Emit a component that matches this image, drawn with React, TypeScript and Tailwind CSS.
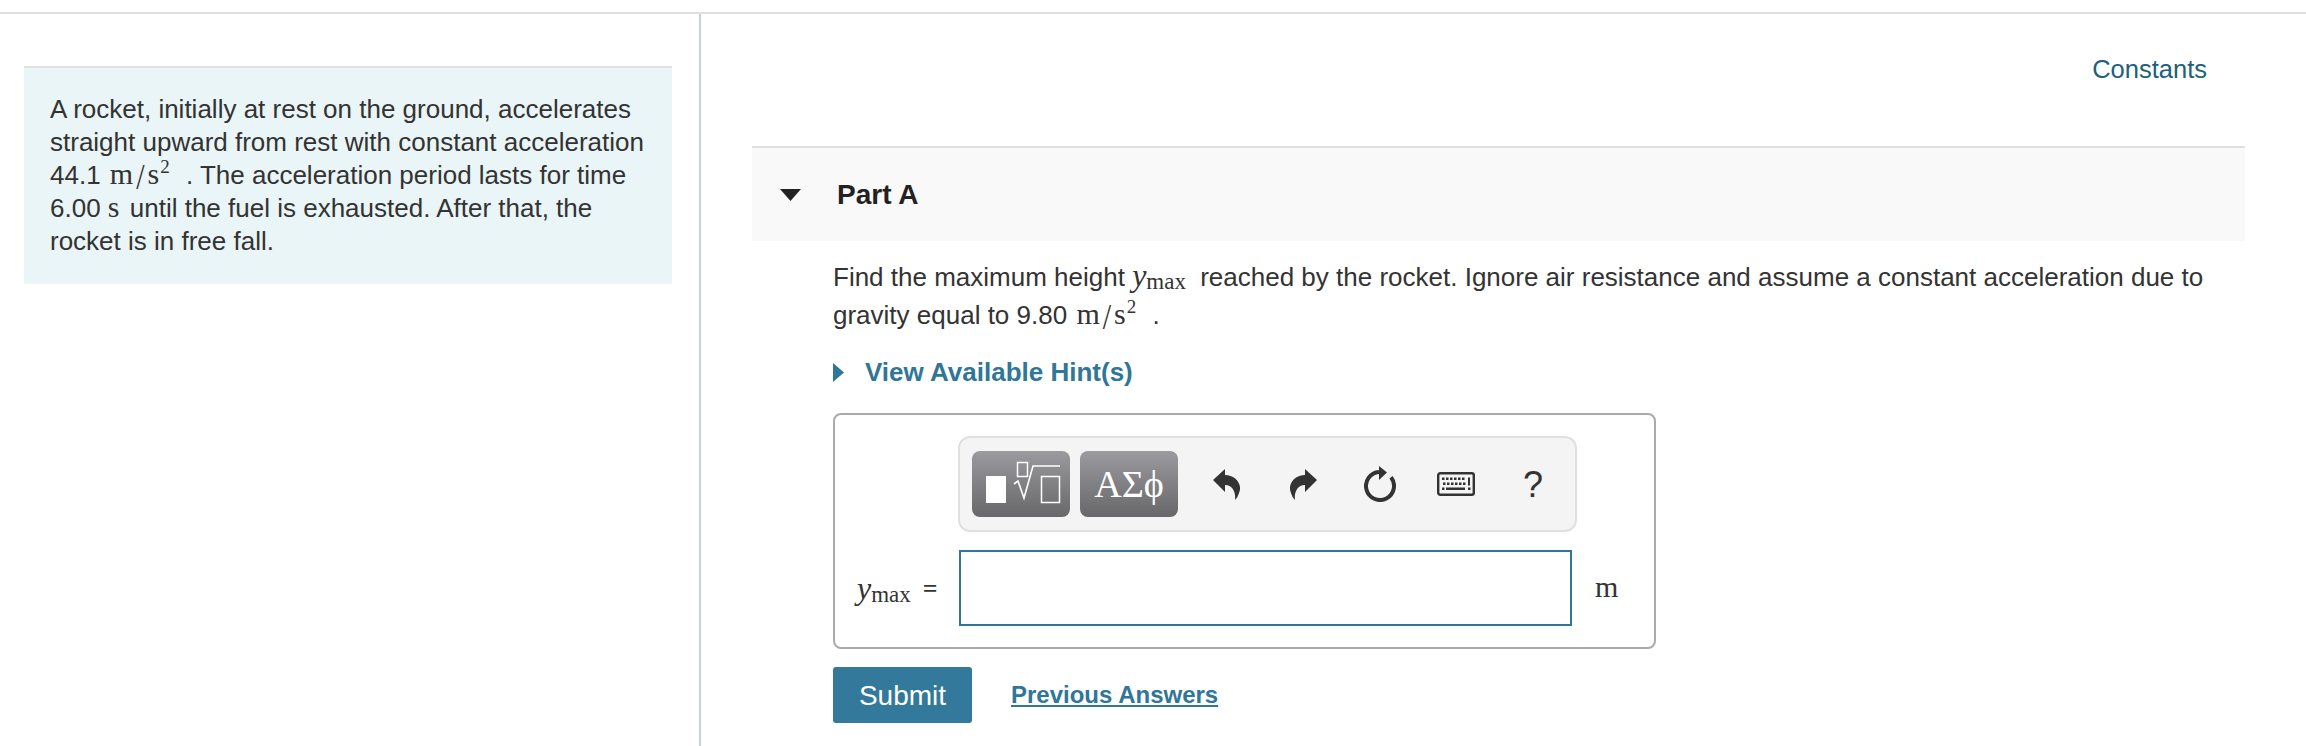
const serif = "font-['Liberation_Serif',serif]"

function MetersPerSecond({ tall }: { tall?: boolean }) {
  return (
    <span className={`${serif} ${tall ? 'inline-block leading-[39px]' : 'leading-none'} ml-[2px] mr-[9px] text-[30px]`}>
      m<span className="relative top-[3px] mx-[3px] inline-block scale-y-[1.2] leading-none">/</span>s
      <span className="relative top-[-11px] ml-[1px] text-[19px] leading-none">2</span>
    </span>
  )
}

function YMax() {
  return (
    <span className={`${serif} leading-none`}>
      <i className="text-[32px] leading-none">y</i>
      <span className="relative top-[3px] text-[23px] leading-none">max</span>
    </span>
  )
}

function RootIcon() {
  return (
    <svg width="98" height="66" viewBox="0 0 98 66" fill="none" stroke="#fff">
      <rect x="14" y="25" width="20" height="27" fill="#fff" stroke="none" />
      <rect x="45.500" y="11.500" width="10" height="14" strokeWidth="1.500" />
      <path d="M42 33 L46 30 L52 47 L61 15 H88" strokeWidth="1.600" />
      <rect x="69.500" y="25.500" width="18" height="26" strokeWidth="1.500" />
    </svg>
  )
}

function UndoIcon({ flip }: { flip?: boolean }) {
  return (
    <svg width="27" height="31" viewBox="0 0 27 31" className={flip ? '-scale-x-100' : ''}>
      <path d="M0 11 L12 0 V6 C22 6 30 15 26 24 C25 27 24 29 22 31 C23 24 20 16 12 16 V23 Z" fill="#333" />
    </svg>
  )
}

function ResetIcon() {
  return (
    <svg width="32" height="36" viewBox="0 0 32 36" fill="none">
      <path d="M15 6 A14 14 0 1 0 27 11.300" stroke="#333" strokeWidth="4" />
      <path d="M15 0 L23 6.500 L15 14 Z" fill="#333" />
    </svg>
  )
}

function KeyboardIcon() {
  return (
    <svg width="38" height="24" viewBox="0 0 38 24" fill="#333">
      <rect x="1.200" y="1.200" width="35.600" height="21.600" rx="2" fill="#f4f4f4" stroke="#333" strokeWidth="2.400" />
      {[5, 9, 13, 17, 21, 25].map((x) => (
        <rect key={x} x={x} y="5.500" width="2.500" height="2.500" />
      ))}
      {[6, 10, 14, 18, 22, 26].map((x) => (
        <rect key={x} x={x} y="10.500" width="2.500" height="2.500" />
      ))}
      <rect x="31" y="5.500" width="2" height="8" />
      <rect x="5" y="15.500" width="2.500" height="2.500" />
      <rect x="9" y="15.500" width="19" height="2.500" />
      <rect x="31" y="15.500" width="2.500" height="2.500" />
    </svg>
  )
}

const toolButton =
  'flex h-[66px] w-[98px] items-center justify-center rounded-lg bg-gradient-to-b from-[#9b9a9f] to-[#68686a] text-white'

export default function App() {
  return (
    <div className="h-[746px] w-[2306px] overflow-hidden bg-white font-['Liberation_Sans',Arial,sans-serif] text-[26px] leading-[33px] text-[#333]">
      <div className="mt-3 flex h-[734px] border-t-2 border-[#e0e0e0]">
        <div className="w-[701px] shrink-0 border-r-2 border-[#c6d0de] pl-6 pt-[52px]">
          <div className="h-[218px] w-[648px] border-t-2 border-[#e0e0e0] bg-[#e9f5f7] pl-[26px] pr-[20px] pt-[25px]">
            A rocket, initially at rest on the ground, accelerates straight upward from rest with constant acceleration 44.1 <MetersPerSecond /> . The acceleration period lasts for time 6.00 <span className={`${serif} mr-[3px] text-[30px] leading-none`}>s</span> until the fuel is exhausted. After that, the rocket is in free fall.
          </div>
        </div>

        <div className="flex-1 pl-[51px] pr-[61px]">
          <div className="flex h-[132px] justify-end pr-[38px] pt-[39px]">
            <a className="text-[25.500px] text-[#215f7a]">Constants</a>
          </div>

          <div className="flex h-[95px] items-center border-t-2 border-[#e0e0e0] bg-[#f9f9f9]">
            <svg width="21" height="12" viewBox="0 0 21 12" className="ml-7">
              <path d="M0 0 H21 L10.500 12 Z" fill="#222" />
            </svg>
            <span className="ml-9 text-[28px] font-bold text-[#222]">Part A</span>
          </div>

          <div className="pl-[81px] pt-[18px]">
            <p>
              Find the maximum height <YMax /><span className="ml-[7px]" /> reached by the rocket. Ignore air resistance and assume a constant acceleration due to gravity equal to 9.80 <MetersPerSecond tall /> .
            </p>

            <div className="mt-[23px] flex items-center text-[#2f7698]">
              <svg width="11" height="19" viewBox="0 0 11 19">
                <path d="M0 0 L11 9.500 L0 19 Z" fill="#2f7698" />
              </svg>
              <span className="ml-[21px] font-bold">View Available Hint(s)</span>
            </div>

            <div className="mt-[24px] h-[236px] w-[823px] rounded-lg border-2 border-[#aaa] pl-[123px] pt-[21px]">
              <div className="flex h-[96px] w-[619px] items-center rounded-xl border-2 border-[#e0e0e0] bg-[#f4f4f4] pl-3">
                <div className={toolButton}>
                  <RootIcon />
                </div>
                <div className={`${toolButton} ml-[10px] ${serif} text-[38px]`}>ΑΣϕ</div>
                <div className="ml-[35px]"><UndoIcon /></div>
                <div className="ml-[50px]"><UndoIcon flip /></div>
                <div className="ml-[47px]"><ResetIcon /></div>
                <div className="ml-[41px]"><KeyboardIcon /></div>
                <span className="ml-[48px] text-[36px]">?</span>
              </div>

              <div className="mt-[18px] flex items-center">
                <div className="-ml-[101px] flex w-[102px] items-center">
                  <YMax />
                  <span className={`${serif} ml-3 text-[26px] font-bold`}>=</span>
                </div>
                <div className="h-[76px] w-[613px] border-2 border-[#2f7698]" />
                <span className={`${serif} ml-[23px] pb-[3px] text-[30px]`}>m</span>
              </div>
            </div>

            <div className="mt-[18px] flex items-center">
              <button className="h-[56px] w-[139px] rounded-[3px] bg-[#33799b] text-[28px] text-white">Submit</button>
              <a className="ml-[39px] pb-[2px] text-[24px] font-bold text-[#2f7698] underline">Previous Answers</a>
            </div>
          </div>
        </div>
      </div>
    </div>
  )
}
